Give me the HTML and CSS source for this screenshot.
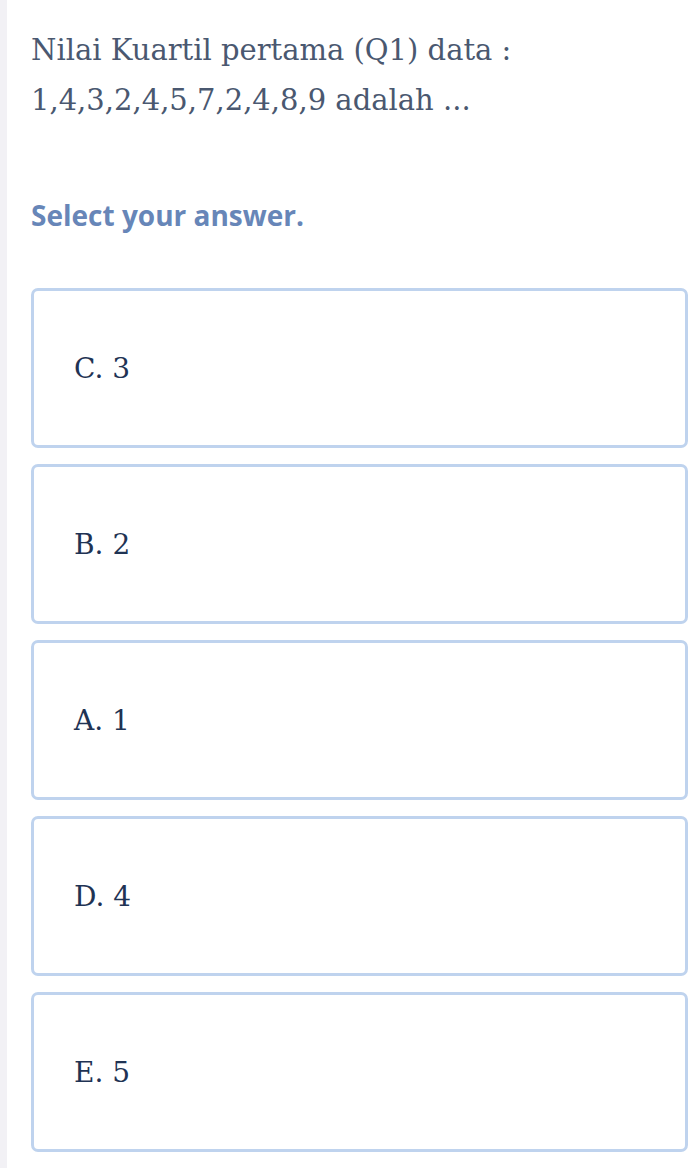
FILE: index.html
```html
<!DOCTYPE html>
<html>
<head>
<meta charset="utf-8">
<link rel="stylesheet" href="styles.css">
</head>
<body>
<div class="page">
  <div class="edge"></div>
  <main class="content">
    <p class="question">Nilai Kuartil pertama (Q1) data :<br>1,4,3,2,4,5,7,2,4,8,9 adalah ...</p>
    <h2 class="prompt">Select your answer.</h2>
    <div class="options">
      <div class="option"><span>C. 3</span></div>
      <div class="option"><span>B. 2</span></div>
      <div class="option"><span>A. 1</span></div>
      <div class="option"><span>D. 4</span></div>
      <div class="option"><span>E. 5</span></div>
    </div>
  </main>
</div>
</body>
</html>
```
FILE: styles.css
```css
html, body {
  margin: 0;
  padding: 0;
  background: #ffffff;
}
.page {
  display: flex;
  min-height: 1168px;
}
.edge {
  width: 7px;
  flex: none;
  background: #f2f1f5;
}
.content {
  flex: 1;
  padding: 25px 8px 0 24px;
}
.question {
  margin: 0;
  font-family: "DejaVu Serif", serif;
  font-size: 29px;
  line-height: 50px;
  color: #4a5870;
}
.prompt {
  margin: 71px 0 0;
  font-family: "Open Sans", sans-serif;
  font-weight: 700;
  font-size: 28px;
  line-height: 38px;
  color: #6786b8;
}
.options {
  margin-top: 54px;
  display: flex;
  flex-direction: column;
  gap: 16px;
}
.option {
  box-sizing: border-box;
  height: 160px;
  border: 3px solid #bfd3ee;
  border-radius: 7px;
  display: flex;
  align-items: center;
  padding-left: 40px;
  font-family: "DejaVu Serif", serif;
  font-size: 28px;
  color: #1f3354;
}
```
